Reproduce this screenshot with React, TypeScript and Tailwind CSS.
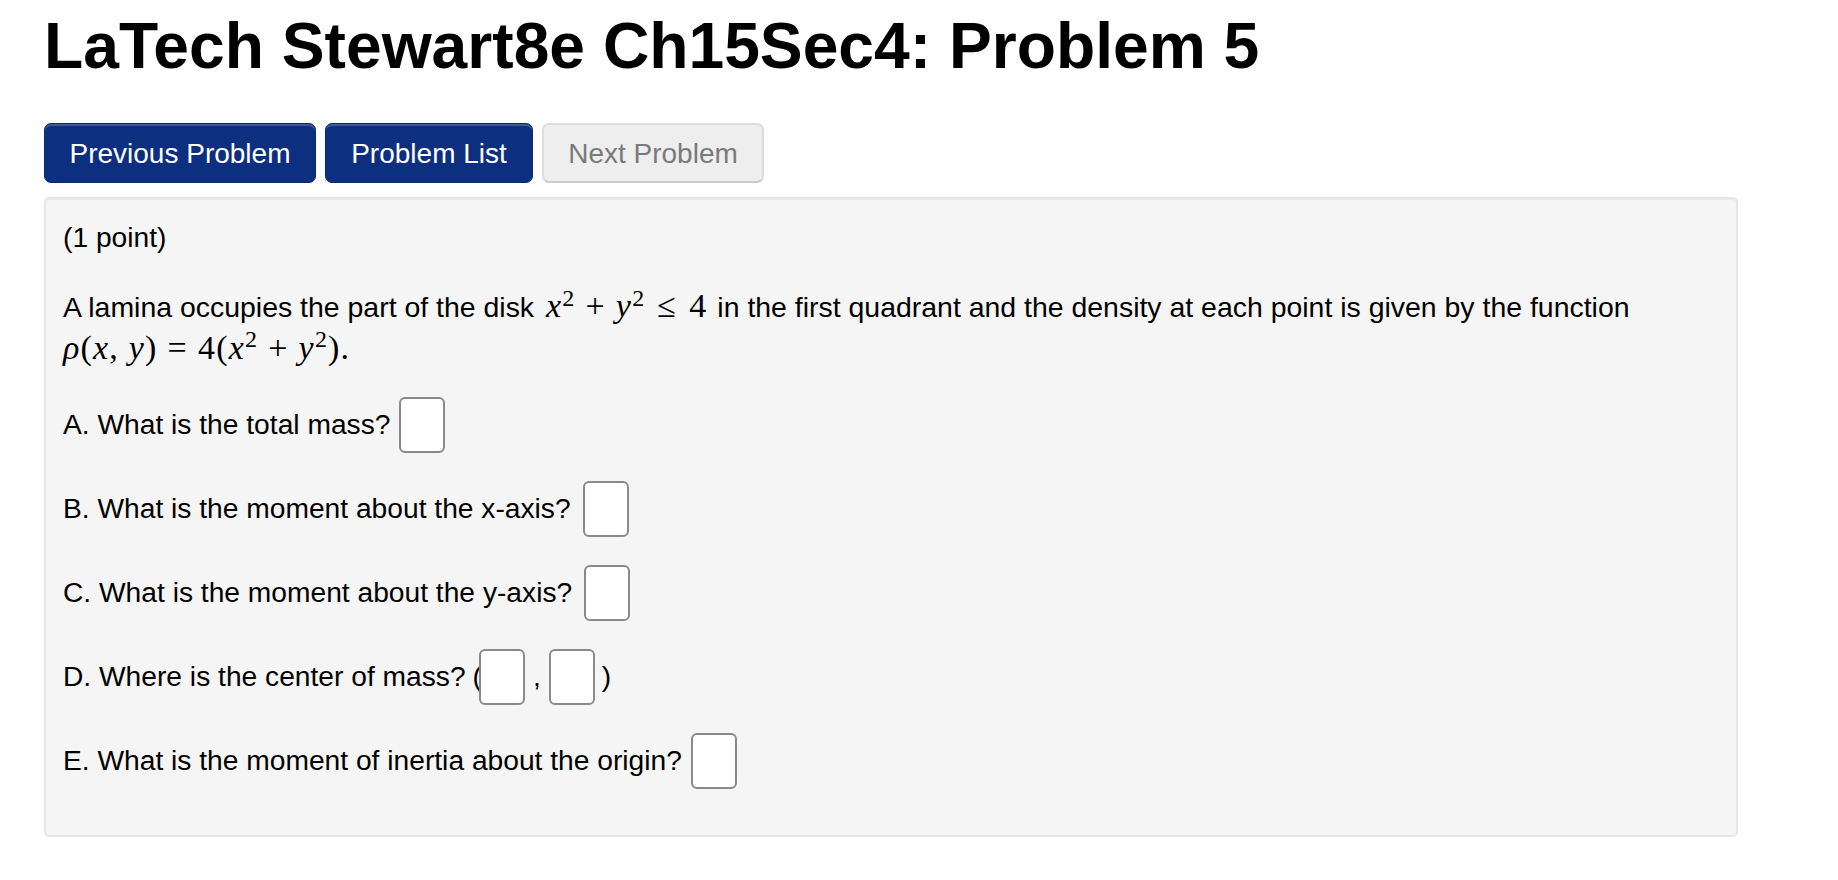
const serif = "font-['Liberation_Serif',serif] text-[34px] leading-none tracking-[1.2px]";

function Box({ className = "" }: { className?: string }) {
  return <input type="text" className={`h-[56px] w-[46px] shrink-0 rounded-[6px] border-2 border-[#8a8a8a] bg-white ${className}`} />;
}

function Sup({ children }: { children: string }) {
  return <sup className="relative top-[1px] text-[24px] leading-none align-super">{children}</sup>;
}

function Op({ children }: { children: string }) {
  return <span className="mx-[10px]">{children}</span>;
}

export default function App() {
  return (
    <div className="min-h-[880px] bg-white pl-[44px] pr-[100px] font-['Liberation_Sans',Arial,sans-serif] text-black">
      <h1 className="h-[123px] pt-[10px] text-[64.2px] font-bold leading-[72px]">LaTech Stewart8e Ch15Sec4: Problem 5</h1>

      <div className="flex gap-[9px] text-[28px]">
        <button className="h-[60px] w-[272px] rounded-[7px] border border-[#0a2a70] bg-[#0d2f7f] pt-[1px] text-white shadow-[inset_0_2px_0_rgba(255,255,255,0.2)]">Previous Problem</button>
        <button className="h-[60px] w-[208px] rounded-[7px] border border-[#0a2a70] bg-[#0d2f7f] pt-[1px] text-white shadow-[inset_0_2px_0_rgba(255,255,255,0.2)]">Problem List</button>
        <button className="h-[60px] w-[222px] rounded-[7px] border-2 border-[#dcdcdc] border-b-[#cccccc] bg-[#eeeeee] pt-[1px] text-[#7a7a7a]">Next Problem</button>
      </div>

      <div className="mt-[14px] h-[640px] rounded-[5px] border-2 border-[#e6e6e6] bg-[#f5f5f5] px-[17px] text-[28.2px] leading-[41px] shadow-[inset_0_1px_1px_rgba(0,0,0,0.05)]">
        <p className="pt-[18px]">(1 point)</p>

        <p className="mt-[27px] text-[28.45px]">
          A lamina occupies the part of the disk{" "}
          <span className={`${serif} ml-[4px] mr-[2px]`}><i>x</i><Sup>2</Sup><Op>+</Op><i>y</i><Sup>2</Sup><span className="mx-[12px]">≤</span>4</span>{" "}
          in the first quadrant and the density at each point is given by the function
          <br />
          <span className={`${serif} relative -top-[2px]`}><i>ρ</i>(<i>x</i>, <i>y</i>)<Op>=</Op>4(<i>x</i><Sup>2</Sup><Op>+</Op><i>y</i><Sup>2</Sup>).</span>
        </p>

        <div className="mt-[25px] flex flex-col gap-[28px]">
          <div className="flex h-[56px] items-center gap-[9px]">A. What is the total mass? <Box /></div>
          <div className="flex h-[56px] items-center gap-[12px]">B. What is the moment about the x-axis? <Box /></div>
          <div className="flex h-[56px] items-center gap-[12px]">C. What is the moment about the y-axis? <Box /></div>
          <div className="flex h-[56px] items-center">
            D. Where is the center of mass? <span className="ml-[7px]">(</span>
            <Box className="-ml-[3px]" />
            <span className="mx-[8px]">,</span>
            <Box />
            <span className="ml-[7px]">)</span>
          </div>
          <div className="flex h-[56px] items-center gap-[9px]">E. What is the moment of inertia about the origin? <Box /></div>
        </div>
      </div>
    </div>
  );
}
